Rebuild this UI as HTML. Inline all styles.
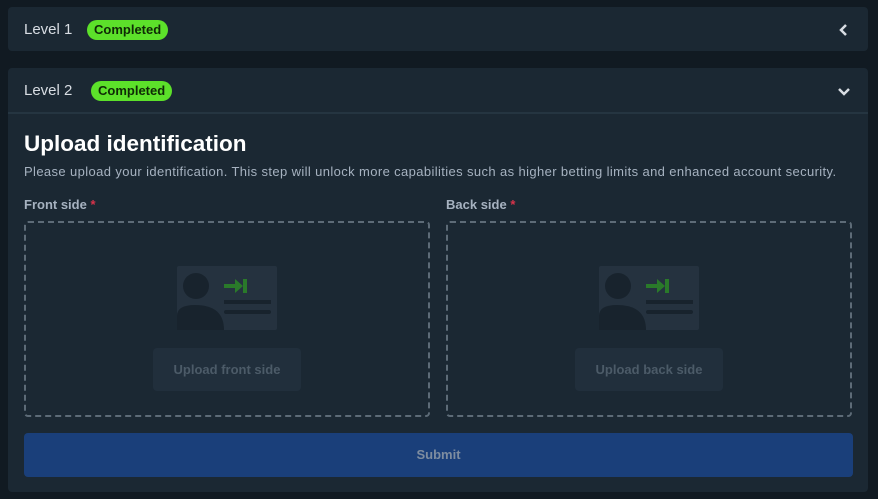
<html><head><style>
body{margin:0;background:#111a22;width:878px;height:499px;font-family:"Liberation Sans",sans-serif;position:relative;overflow:hidden}
.p{position:absolute;left:8px;width:860px;background:#1b2833;border-radius:4px}
.hd{position:absolute;left:24px;font-size:15px;color:#d8dde3}
.badge{position:absolute;background:#5ce12a;color:#0f2a06;font-weight:bold;font-size:13px;border-radius:10px;padding:0 7px;height:20px;line-height:20px}
.dz{position:absolute;top:221px;width:402px;height:192px;border:2px dashed #5d6b77;border-radius:4px}
.lbl{position:absolute;top:197px;font-size:13px;font-weight:bold;color:#a6b2c0}
.lbl span{color:#d8334a}
.btn{position:absolute;top:125px;width:148px;height:43px;background:#212f3c;border-radius:4px;color:#4c5b68;font-size:13px;font-weight:bold;text-align:center;line-height:43px}
</style></head><body>
<div class="p" style="top:7px;height:44px"></div>
<div class="hd" style="top:21px">Level 1</div>
<div class="badge" style="left:87px;top:20px">Completed</div>
<svg style="position:absolute;left:838px;top:23px" width="12" height="14"><path d="M8 2 L3 7 L8 12" stroke="#d8dde3" stroke-width="2.5" fill="none"/></svg>
<div class="p" style="top:68px;height:424px"></div>
<div style="position:absolute;left:8px;top:112px;width:860px;height:2px;background:#253541"></div>
<div class="hd" style="top:82px">Level 2</div>
<div class="badge" style="left:91px;top:81px">Completed</div>
<svg style="position:absolute;left:837px;top:85px" width="14" height="12"><path d="M2 4 L7 9 L12 4" stroke="#d8dde3" stroke-width="2.5" fill="none"/></svg>
<div style="position:absolute;left:24px;top:131px;font-size:22.5px;font-weight:bold;color:#fff">Upload identification</div>
<div style="position:absolute;left:24px;top:164px;font-size:13px;letter-spacing:0.38px;color:#a6b2c0;white-space:nowrap">Please upload your identification. This step will unlock more capabilities such as higher betting limits and enhanced account security.</div>
<div class="lbl" style="left:24px">Front side <span>*</span></div>
<div class="lbl" style="left:446px">Back side <span>*</span></div>
<div class="dz" style="left:24px">
<svg style="position:absolute;left:151px;top:41px" width="101" height="66"><rect x="0" y="2" width="100" height="64" rx="2" fill="#25323f"/><circle cx="19" cy="22" r="13" fill="#18232d"/><path d="M0 66 L0 52 Q0 41 18 41 Q47 41 47 66Z" fill="#18232d"/><rect x="47" y="36" width="47" height="4" fill="#18232d"/><rect x="47" y="46" width="47" height="4" rx="2" fill="#18232d"/><rect x="47" y="20" width="12" height="4" fill="#2a7a2a"/><path d="M58 15 L66 22 L58 29Z" fill="#2a7a2a"/><rect x="66" y="15" width="4" height="14" fill="#2a7a2a"/></svg>
<div class="btn" style="left:127px">Upload front side</div></div>
<div class="dz" style="left:446px">
<svg style="position:absolute;left:151px;top:41px" width="101" height="66"><rect x="0" y="2" width="100" height="64" rx="2" fill="#25323f"/><circle cx="19" cy="22" r="13" fill="#18232d"/><path d="M0 66 L0 52 Q0 41 18 41 Q47 41 47 66Z" fill="#18232d"/><rect x="47" y="36" width="47" height="4" fill="#18232d"/><rect x="47" y="46" width="47" height="4" rx="2" fill="#18232d"/><rect x="47" y="20" width="12" height="4" fill="#2a7a2a"/><path d="M58 15 L66 22 L58 29Z" fill="#2a7a2a"/><rect x="66" y="15" width="4" height="14" fill="#2a7a2a"/></svg>
<div class="btn" style="left:127px">Upload back side</div></div>
<div style="position:absolute;left:24px;top:433px;width:829px;height:44px;background:#1a3f7a;border-radius:4px;color:#7e8da0;font-size:13px;font-weight:bold;text-align:center;line-height:44px">Submit</div>
</body></html>
